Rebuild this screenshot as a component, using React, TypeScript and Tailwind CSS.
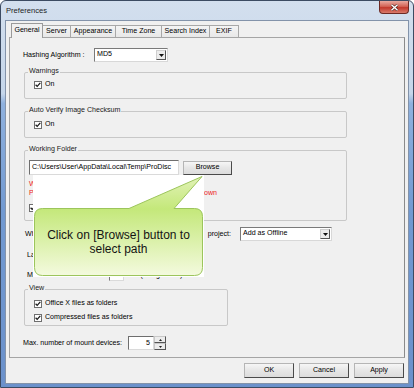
import React from 'react';

type CheckProps = {
  label?: string;
  className?: string;
};

function Check({ label, className = '' }: CheckProps) {
  return (
    <div className={`flex h-[9px] items-center gap-[3px] ${className}`}>
      <span className="flex h-[8px] w-[8px] shrink-0 items-center justify-center border border-[#6f6f6f] bg-white">
        <svg width="6" height="6" viewBox="0 0 6 6">
          <path d="M0.6 2.8L2.2 4.4L5.3 0.9" fill="none" stroke="#1a1a1a" strokeWidth="1.3" />
        </svg>
      </span>
      {label && <span className="whitespace-nowrap leading-[9px]">{label}</span>}
    </div>
  );
}

function Legend({ children }: { children: React.ReactNode }) {
  return (
    <div className="-mt-[6px] ml-[3px] w-fit bg-[#f0f0f0] px-[1px] leading-[9px] text-[#1b1b1b]">
      {children}
    </div>
  );
}

function Arrow() {
  return (
    <svg width="5" height="3" viewBox="0 0 5 3">
      <path d="M0 0H5L2.5 3Z" fill="#111" />
    </svg>
  );
}

function Button({ label, className = '' }: { label: string; className?: string }) {
  return (
    <div
      className={`flex items-center justify-center border border-[#b5b5b5] border-r-[#4a4a4a] border-b-[#4a4a4a] bg-[linear-gradient(180deg,#f6f6f6,#e6e6e6_50%,#dcdcdc)] leading-none ${className}`}
    >
      {label}
    </div>
  );
}

function Select({ value, className = '' }: { value: string; className?: string }) {
  return (
    <div
      className={`flex items-center justify-between border border-[#7a7a7a] border-r-[#d8d8d8] border-b-[#d8d8d8] bg-white pl-[2px] ${className}`}
    >
      <span className="leading-none">{value}</span>
      <span className="mr-[1px] flex h-[10px] w-[10px] items-center justify-center border border-[#cfcfcf] border-r-[#555] border-b-[#555] bg-[#ececec]">
        <Arrow />
      </span>
    </div>
  );
}

const tabs = [
  { label: 'General', w: 'w-[32px]' },
  { label: 'Server', w: 'w-[28px]' },
  { label: 'Appearance', w: 'w-[45px]' },
  { label: 'Time Zone', w: 'w-[46px]' },
  { label: 'Search Index', w: 'w-[48px]' },
  { label: 'EXIF', w: 'w-[29px]' },
];

export default function App() {
  return (
    <div className="relative h-[388px] w-[414px] overflow-hidden rounded-t-[6px] border border-[#3c4b62] bg-[linear-gradient(180deg,#d3dfee_0%,#c5d6ea_24%,#8fb1de_26.5%,#7199d1_55%,#6b91cb_100%)] font-['Liberation_Sans',Arial,sans-serif] text-[7.1px] text-black">
      {/* title bar */}
      <div className="flex h-[19px] items-start justify-between">
        <span className="mt-[5px] pl-[5px] text-[7.6px] leading-[9px] text-[#1d1d1d]">Preferences</span>
        <div className="mr-[4px] flex h-[13px] w-[30px] items-center justify-center rounded-b-[4px] border border-t-0 border-[#6d2a24] bg-[linear-gradient(180deg,#e9aaa0_0%,#d36456_45%,#c2392c_55%,#d97b6c_100%)]">
          <svg width="9" height="7" viewBox="0 0 9 7">
            <path d="M1.5 0.8L7.5 6.2M7.5 0.8L1.5 6.2" stroke="#4a1d18" strokeWidth="2.6" />
            <path d="M1.5 0.8L7.5 6.2M7.5 0.8L1.5 6.2" stroke="#ffffff" strokeWidth="1.5" />
          </svg>
        </div>
      </div>

      {/* client area */}
      <div className="ml-[4px] flex h-[364px] w-[404px] flex-col border border-[#8393aa] bg-[#f0f0f0]">
        {/* tabs */}
        <div className="relative z-10 -mb-[1px] mt-[1px] flex h-[16px] items-end pl-[5px]">
          {tabs.map((t, i) =>
            i === 0 ? (
              <div
                key={t.label}
                className={`flex h-[15px] items-center justify-center border border-b-0 border-[#9a9a9a] bg-[#f0f0f0] pb-[1px] ${t.w}`}
              >
                {t.label}
              </div>
            ) : (
              <div
                key={t.label}
                className={`mb-[1px] flex h-[12px] items-center justify-center whitespace-nowrap border border-b-0 border-l-0 border-[#a8a8a8] bg-[linear-gradient(180deg,#f4f4f4,#e8e8e8)] ${t.w}`}
              >
                {t.label}
              </div>
            ),
          )}
        </div>

        {/* tab panel */}
        <div className="ml-[3px] flex h-[321px] w-[396px] flex-col border border-[#a5a5a5] border-r-[#8a8a8a] bg-[#f0f0f0]">
          <div className="mt-[10px] flex h-[14px] items-center pl-[13px]">
            <span className="w-[71px] whitespace-nowrap">Hashing Algorithm :</span>
            <Select value="MD5" className="h-[14px] w-[74px]" />
          </div>

          <div className="ml-[14px] mt-[10px] h-[27px] w-[323px] rounded-[2px] border border-[#c8c8c8]">
            <Legend>Warnings</Legend>
            <Check label="On" className="ml-[9px] mt-[4px]" />
          </div>

          <div className="ml-[14px] mt-[12px] h-[27px] w-[323px] rounded-[2px] border border-[#c8c8c8]">
            <Legend>Auto Verify Image Checksum</Legend>
            <Check label="On" className="ml-[9px] mt-[5px]" />
          </div>

          <div className="ml-[14px] mt-[12px] h-[71px] w-[323px] rounded-[2px] border border-[#c8c8c8]">
            <Legend>Working Folder</Legend>
            <div className="ml-[4px] mt-[6px] flex items-start gap-[4px]">
              <div className="h-[15px] w-[150px] overflow-hidden whitespace-nowrap border border-[#6e6e6e] border-r-[#dadada] border-b-[#dadada] bg-white pl-[2px] leading-[13px]">
                C:\Users\User\AppData\Local\Temp\ProDisc
              </div>
              <Button label="Browse" className="mt-[1px] h-[14px] w-[49px]" />
            </div>
            <div className="ml-[4px] mt-[5px] whitespace-nowrap leading-[8.5px] text-[#ee1b1b]">
              <div className="w-[175px] [text-align-last:justify]">Warning: changing it clears cached data.</div>
              <div className="w-[188px] [text-align-last:justify]">Placing it on a network drive may slow it down</div>
            </div>
            <Check label="Clear working folder on exit" className="ml-[4px] mt-[6px]" />
          </div>

          <div className="mt-[6px] flex h-[14px] items-center pl-[15px]">
            <span className="w-[206px] whitespace-nowrap [text-align-last:justify]">When adding a drive or image file to the project:</span>
            <Select value="Add as Offline" className="ml-[9px] h-[14px] w-[92px]" />
          </div>

          <div className="ml-[17px] mt-[9px] flex h-[10px] items-center whitespace-nowrap">Language for reports:</div>

          <div className="ml-[17px] mt-[10px] flex h-[10px] items-center whitespace-nowrap">
            <span className="w-[82px]">Max. cache size:</span>
            <span className="h-[11px] w-[15px] border border-[#7a7a7a] border-r-[#dadada] border-b-[#dadada] bg-white" />
            <span className="ml-[4px]">MB (Range 1-16)</span>
          </div>

          <div className="ml-[14px] mt-[9px] h-[37px] w-[204px] rounded-[2px] border border-[#c8c8c8]">
            <Legend>View</Legend>
            <Check label="Office X files as folders" className="ml-[9px] mt-[6px]" />
            <Check label="Compressed files as folders" className="ml-[9px] mt-[5px]" />
          </div>

          <div className="mt-[10px] flex h-[14px] items-center pl-[13px]">
            <span className="w-[105px] whitespace-nowrap">Max. number of mount devices:</span>
            <div className="flex h-[14px] w-[26px] items-center justify-end border border-[#6e6e6e] border-r-[#dadada] border-b-[#dadada] bg-white pr-[3px]">
              5
            </div>
            <div className="flex h-[14px] w-[12px] flex-col">
              <span className="flex h-[7px] items-center justify-center border border-[#c8c8c8] border-r-[#555] border-b-[#555] bg-[#ececec]">
                <svg width="3" height="2" viewBox="0 0 3 2">
                  <path d="M0 2H3L1.5 0Z" fill="#222" />
                </svg>
              </span>
              <span className="flex h-[7px] items-center justify-center border border-[#c8c8c8] border-r-[#555] border-b-[#555] bg-[#ececec]">
                <svg width="3" height="2" viewBox="0 0 3 2">
                  <path d="M0 0H3L1.5 2Z" fill="#222" />
                </svg>
              </span>
            </div>
          </div>
        </div>

        {/* dialog buttons */}
        <div className="mt-[5px] flex justify-end gap-[5px] pr-[4px]">
          <Button label="OK" className="h-[15px] w-[50px]" />
          <Button label="Cancel" className="h-[15px] w-[50px]" />
          <Button label="Apply" className="h-[15px] w-[50px]" />
        </div>
      </div>

      {/* callout overlay */}
      <div className="absolute left-[32px] top-[174px] h-[102px] w-[171px] bg-white">
        <svg className="absolute inset-0" width="171" height="102" viewBox="0 0 171 102">
          <defs>
            <linearGradient id="bubble" x1="0" y1="1" x2="0" y2="101" gradientUnits="userSpaceOnUse">
              <stop offset="0" stopColor="#e2f2b8" />
              <stop offset="0.33" stopColor="#c4e87a" />
              <stop offset="1" stopColor="#f4fadf" />
            </linearGradient>
          </defs>
          <path
            d="M9.5 33.5 L96 33.5 L169 1.5 L141 33.5 L161.5 33.5 Q169.5 33.5 169.5 41.5 L169.5 92.5 Q169.5 100.5 161.5 100.5 L9.5 100.5 Q1.5 100.5 1.5 92.5 L1.5 41.5 Q1.5 33.5 9.5 33.5 Z"
            fill="url(#bubble)"
            stroke="#9cc55c"
            strokeWidth="1"
          />
        </svg>
        <div className="absolute left-[1px] top-[33px] flex h-[68px] w-[169px] flex-col items-center justify-center text-[12px] leading-[14px] text-[#141414]">
          <span>Click on [Browse] button to</span>
          <span>select path</span>
        </div>
      </div>
    </div>
  );
}
